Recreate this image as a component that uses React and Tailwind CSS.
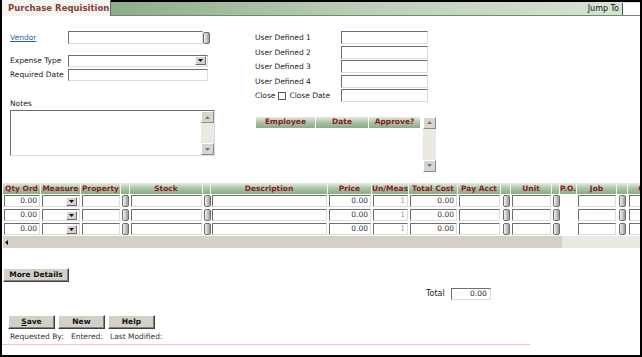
import React from 'react';

const sunken =
  'bg-white border border-t-[#6f6f6f] border-l-[#6f6f6f] border-r-[#dcdcdc] border-b-[#dcdcdc]';

function LookupBtn() {
  return (
    <div className="w-[7px] h-[12px] rounded-[2px] border border-[#6e6e6e] bg-gradient-to-r from-[#f2f2f2] via-[#c9c9c9] to-[#9a9a9a]" />
  );
}

function DropArrow() {
  return (
    <div className="w-[11px] h-[9px] bg-[#d6d3ce] border border-t-white border-l-white border-r-[#6b6b6b] border-b-[#6b6b6b] flex items-center justify-center">
      <svg width="5" height="3" viewBox="0 0 5 3"><path d="M0 0h5L2.5 3z" fill="#111" /></svg>
    </div>
  );
}

function VScroll({ h }) {
  return (
    <div className="w-[13px] bg-[#ece9e4] flex flex-col justify-between" style={{ height: h }}>
      <div className="h-[12px] bg-[#d8d5cf] border border-t-white border-l-white border-r-[#8a8a8a] border-b-[#8a8a8a] flex items-center justify-center">
        <svg width="5" height="3" viewBox="0 0 5 3"><path d="M0 3h5L2.5 0z" fill="#777" /></svg>
      </div>
      <div className="h-[12px] bg-[#d8d5cf] border border-t-white border-l-white border-r-[#8a8a8a] border-b-[#8a8a8a] flex items-center justify-center">
        <svg width="5" height="3" viewBox="0 0 5 3"><path d="M0 0h5L2.5 3z" fill="#777" /></svg>
      </div>
    </div>
  );
}

const hdrBg = 'bg-gradient-to-b from-[#e3ece0] via-[#a9c2a6] to-[#8caa8a]';

const cols = [
  { w: 38, label: 'Qty Ord', type: 'num' },
  { w: 40, label: 'Measure', type: 'sel' },
  { w: 40, label: 'Property', type: 'txt' },
  { w: 9, label: '', type: 'btn' },
  { w: 73, label: 'Stock', type: 'txt' },
  { w: 8, label: '', type: 'btn' },
  { w: 117, label: 'Description', type: 'txt' },
  { w: 44, label: 'Price', type: 'num' },
  { w: 37, label: 'Un/Meas', type: 'one' },
  { w: 49, label: 'Total Cost', type: 'num' },
  { w: 43, label: 'Pay Acct', type: 'txt' },
  { w: 10, label: '', type: 'btn' },
  { w: 41, label: 'Unit', type: 'txt' },
  { w: 8, label: '', type: 'btn' },
  { w: 17, label: 'P.O.', type: 'none' },
  { w: 40, label: 'Job', type: 'txt' },
  { w: 11, label: '', type: 'btn' },
  { w: 40, label: 'Cost', type: 'txt' },
];

function Cell({ c }) {
  if (c.type === 'btn')
    return (
      <div className="flex justify-center shrink-0" style={{ width: c.w }}>
        <LookupBtn />
      </div>
    );
  if (c.type === 'none') return <div className="shrink-0" style={{ width: c.w }} />;
  return (
    <div className="shrink-0 flex justify-center" style={{ width: c.w }}>
      <div
        className={`${sunken} h-[12px] flex items-center justify-end pr-[2px] text-[7.5px]`}
        style={{ width: c.w - 2 }}
      >
        {c.type === 'num' && <span className="text-[#333]">0.00</span>}
        {c.type === 'one' && <span className="text-[#999]">1</span>}
        {c.type === 'sel' && <DropArrow />}
      </div>
    </div>
  );
}

function Btn({ children, w = 'w-[47px]' }) {
  return (
    <div className={`${w} h-[14px] bg-[#d4d0c8] border border-t-white border-l-white border-r-[#404040] border-b-[#404040] shadow-[inset_-1px_-1px_0_#808080] flex items-center justify-center text-[7.5px] font-bold text-[#111]`}>
      {children}
    </div>
  );
}

export default function App() {
  return (
    <div className="w-[642px] h-[357px] bg-white font-['DejaVu_Sans',sans-serif] text-[7.5px] text-[#222] flex flex-col border-l-2 border-r-2 border-b-2 border-black overflow-hidden">
      {/* title bar */}
      <div className="h-[16px] flex shrink-0">
        <div className="w-[109px] bg-[#f4f4f1] pl-[6px] flex items-center text-[8.5px] font-bold text-[#8a3b3b] border-r border-[#5a6d58] whitespace-nowrap overflow-hidden">
          Purchase Requisition
        </div>
        <div className="flex-1 border-t-2 border-black border-b border-b-[#6f8a6c] bg-gradient-to-r from-[#8fac8c] via-[#bdd0b9] to-[#d9e4d5] flex items-center justify-end">
          <span className="text-[8px] text-[#111] mr-[3px]">Jump To</span>
          <div className="w-[18px] h-[12px] bg-white border-l border-[#555]" />
        </div>
      </div>

      {/* top form */}
      <div className="flex pl-[8px] pt-[15px] h-[167px] shrink-0">
        <div className="w-[206px] flex flex-col">
          <div className="flex items-center h-[13px]">
            <span className="w-[58px] text-[#2a5fa8] underline">Vendor</span>
            <div className="flex items-center">
              <div className={`${sunken} w-[135px] h-[13px]`} />
              <LookupBtn />
            </div>
          </div>
          <div className="flex items-center h-[13px] mt-[10px]">
            <span className="w-[58px]">Expense Type</span>
            <div className={`${sunken} w-[140px] h-[12px] flex items-center justify-end pr-[1px]`}>
              <DropArrow />
            </div>
          </div>
          <div className="flex items-center h-[13px] mt-[1px]">
            <span className="w-[58px]">Required Date</span>
            <div className={`${sunken} w-[140px] h-[12px]`} />
          </div>
          <div className="mt-[18px] h-[10px] leading-[10px]">Notes</div>
          <div className={`${sunken} w-[205px] h-[46px] mt-[1px] flex justify-end`}>
            <VScroll h={44} />
          </div>
        </div>

        <div className="ml-[39px] flex flex-col">
          <div className="flex flex-col gap-[1px]">
            {['User Defined 1', 'User Defined 2', 'User Defined 3', 'User Defined 4'].map((t) => (
              <div key={t} className="flex items-center h-[13.5px]">
                <span className="w-[86px]">{t}</span>
                <div className={`${sunken} w-[87px] h-[13px]`} />
              </div>
            ))}
            <div className="flex items-center h-[13.5px]">
              <span className="w-[86px] flex items-center">
                Close
                <span className="inline-block w-[8px] h-[8px] border border-[#555] bg-white mx-[3px]" />
                Close Date
              </span>
              <div className={`${sunken} w-[87px] h-[13px]`} />
            </div>
          </div>
          <div className="flex mt-[14px] ml-[1px]">
            <div className="flex h-[11px] w-[164px] gap-[1px]">
              {[
                ['Employee', 59],
                ['Date', 52],
                ['Approve?', 51],
              ].map(([t, w]) => (
                <div
                  key={t}
                  className={`${hdrBg} flex items-center justify-center text-[7.5px] font-bold text-[#8b1d1d]`}
                  style={{ width: w }}
                >
                  {t}
                </div>
              ))}
            </div>
            <div className="ml-[3px]">
              <VScroll h={55} />
            </div>
          </div>
        </div>
      </div>

      {/* grid */}
      <div className="pl-[1px] shrink-0">
        <div className="flex h-[11px]">
          {cols.map((c, i) => (
            <div
              key={i}
              className={`${hdrBg} shrink-0 flex items-center justify-center text-[7.5px] font-bold text-[#8b1d1d] border-r border-[#eef3ec] overflow-hidden whitespace-nowrap`}
              style={{ width: c.w }}
            >
              {c.label}
            </div>
          ))}
        </div>
        {[0, 1, 2].map((r) => (
          <div key={r} className="flex h-[14px] items-center">
            {cols.map((c, i) => (
              <Cell key={i} c={c} />
            ))}
          </div>
        ))}
        <div className="flex h-[12px]">
          <div className="w-[559px] bg-[#d4d0c8] flex items-center pl-[2px]">
            <svg width="3" height="5" viewBox="0 0 3 5"><path d="M3 0v5L0 2.5z" fill="#111" /></svg>
          </div>
          <div className="flex-1 bg-[#ebe9e4]" />
        </div>
      </div>

      {/* lower */}
      <div className="pl-[1px] mt-[20px] shrink-0">
        <Btn w="w-[66px]">More Details</Btn>
      </div>
      <div className="flex items-center pl-[424px] mt-[6px] h-[12px] shrink-0">
        <span className="text-[8px] mr-[6px]">Total</span>
        <div className={`${sunken} w-[40px] h-[12px] flex items-center justify-end pr-[3px]`}>0.00</div>
      </div>
      <div className="flex gap-[3px] pl-[6px] mt-[15px] shrink-0">
        <Btn>
          <span className="underline">S</span>ave
        </Btn>
        <Btn>New</Btn>
        <Btn>Help</Btn>
      </div>
      <div className="pl-[8px] mt-[3px] text-[7.5px] text-[#333] whitespace-pre h-[10px] leading-[10px] shrink-0">
        {'Requested By:   Entered:   Last Modified:'}
      </div>
      <div className="w-[528px] h-px bg-[#f3c4cc] mt-[2px] shrink-0" />
    </div>
  );
}
